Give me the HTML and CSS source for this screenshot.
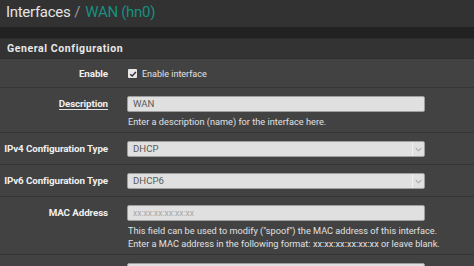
FILE: index.html
```html
<!DOCTYPE html>
<html>
<head>
<meta charset="utf-8">
<link rel="stylesheet" href="styles.css">
</head>
<body>
<div class="page-header">
  <h1 class="title"><span class="crumb">Interfaces</span><span class="sep">/</span><span class="current">WAN (hn0)</span></h1>
</div>
<div class="band"></div>
<div class="panel">
  <div class="panel-heading">General Configuration</div>
  <div class="panel-body">
    <div class="row row-enable">
      <div class="label">Enable</div>
      <div class="field">
        <label class="check"><span class="box"><svg viewBox="0 0 10 10" width="8" height="8"><path d="M1.5 5.2 L4 7.6 L8.6 2.4" fill="none" stroke="#333" stroke-width="1.8"/></svg></span>Enable interface</label>
      </div>
    </div>
    <div class="row">
      <div class="label"><span class="ul">Description</span></div>
      <div class="field">
        <div class="input">WAN</div>
        <div class="help">Enter a description (name) for the interface here.</div>
      </div>
    </div>
    <div class="row">
      <div class="label">IPv4 Configuration Type</div>
      <div class="field">
        <div class="input select"><span class="val">DHCP</span><span class="caret"><svg viewBox="0 0 10 6" width="7" height="5"><path d="M1 1 L5 5 L9 1" fill="none" stroke="#8a8a8a" stroke-width="1.4"/></svg></span></div>
      </div>
    </div>
    <div class="row">
      <div class="label">IPv6 Configuration Type</div>
      <div class="field">
        <div class="input select"><span class="val">DHCP6</span><span class="caret"><svg viewBox="0 0 10 6" width="7" height="5"><path d="M1 1 L5 5 L9 1" fill="none" stroke="#8a8a8a" stroke-width="1.4"/></svg></span></div>
      </div>
    </div>
    <div class="row">
      <div class="label">MAC Address</div>
      <div class="field">
        <div class="input placeholder">xx:xx:xx:xx:xx:xx</div>
        <div class="help">This field can be used to modify ("spoof") the MAC address of this interface.<br>Enter a MAC address in the following format: xx:xx:xx:xx:xx:xx or leave blank.</div>
      </div>
    </div>
    <div class="row">
      <div class="label"></div>
      <div class="field">
        <div class="input"></div>
      </div>
    </div>
  </div>
</div>
</body>
</html>
```
FILE: styles.css
```css
* { box-sizing: border-box; }
html, body { margin: 0; padding: 0; }
body {
  background: #424242;
  font-family: Roboto, "Liberation Sans", Arial, sans-serif;
  color: #e6e6e6;
  width: 474px;
  height: 266px;
  overflow: hidden;
}
.page-header {
  background: #323232;
  height: 27px;
  padding: 0 0 0 6px;
  display: flex;
  align-items: center;
}
.title {
  margin: 0;
  font-weight: 400;
  font-size: 15px;
  line-height: 20px;
  margin-top: -3px;
  letter-spacing: -0.3px;
  white-space: nowrap;
}
.crumb { color: #e4e4e4; }
.sep { color: #9a9a9a; margin: 0 5px 0 4px; }
.current { color: #17907f; }
.band {
  background: #222222;
  height: 12px;
  border-bottom: 1px solid #2c2c2c;
}
.panel-heading {
  background: #333333;
  height: 20px;
  padding-left: 7px;
  font-size: 10.5px;
  font-weight: 700;
  letter-spacing: 0.6px;
  line-height: 19px;
  color: #e8e8e8;
  border-bottom: 1px solid #2e2e2e;
  white-space: nowrap;
}
.panel-body { background: #424242; }
.row {
  display: flex;
  border-bottom: 1px solid #363636;
  padding: 8px 0 7px;
}
.row-enable { padding: 8px 0 7px; height: 29px; align-items: center; }
.label {
  width: 108px;
  flex: none;
  text-align: right;
  font-weight: 700;
  font-size: 9.8px;
  letter-spacing: -0.1px;
  color: #f0f0f0;
  line-height: 16px;
  white-space: nowrap;
  direction: rtl;
}
.ul { border-bottom: 1px solid #e0e0e0; padding-bottom: 0; }
.field {
  margin-left: 19px;
  width: 298px;
  flex: none;
}
.check {
  display: flex;
  align-items: center;
  font-size: 9px;
  color: #e2e2e2;
}
.box {
  width: 9px;
  height: 9px;
  background: #e8e8e8;
  border-radius: 1px;
  margin: 0 5px 0 1px;
  display: flex;
  align-items: center;
  justify-content: center;
}
.input {
  height: 16px;
  background: #e0e0e0;
  border: 1px solid #9e9e9e;
  border-radius: 2px;
  font-size: 9.6px;
  color: #5a5a5a;
  line-height: 14px;
  padding-left: 5px;
}
.placeholder { color: #a8a8a8; font-size: 8.5px; letter-spacing: 0; }
.select { display: flex; padding-right: 0; }
.select .val { flex: 1; }
.caret {
  width: 12px;
  border-left: 1px solid #f0f0f0;
  display: flex;
  align-items: center;
  justify-content: center;
}
.help {
  margin: 3px 0 -3px 1px;
  font-size: 9.2px;
  line-height: 13px;
  color: #e0e0e0;
  white-space: nowrap;
}
```
